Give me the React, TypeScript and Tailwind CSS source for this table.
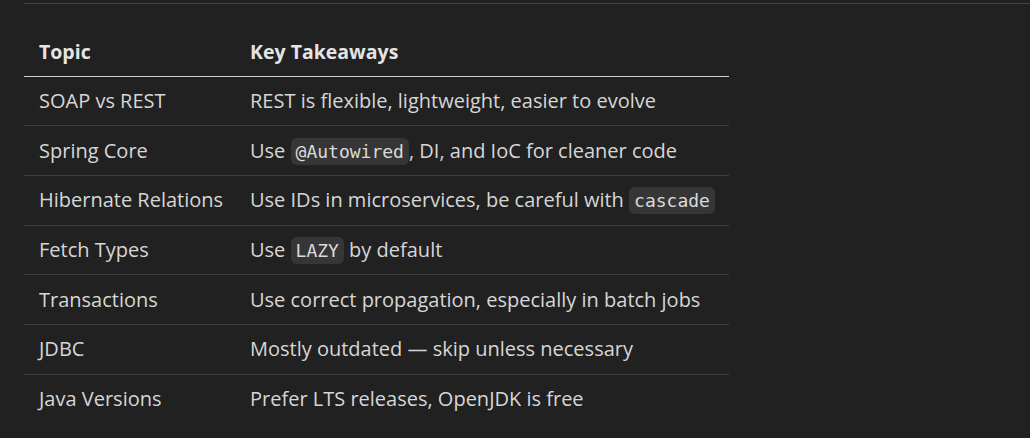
import React from "react";

type Part = string | { code: string };

const rows: { topic: string; takeaway: Part[] }[] = [
  { topic: "SOAP vs REST", takeaway: ["REST is flexible, lightweight, easier to evolve"] },
  { topic: "Spring Core", takeaway: ["Use ", { code: "@Autowired" }, ", DI, and IoC for cleaner code"] },
  { topic: "Hibernate Relations", takeaway: ["Use IDs in microservices, be careful with ", { code: "cascade" }] },
  { topic: "Fetch Types", takeaway: ["Use ", { code: "LAZY" }, " by default"] },
  { topic: "Transactions", takeaway: ["Use correct propagation, especially in batch jobs"] },
  { topic: "JDBC", takeaway: ["Mostly outdated — skip unless necessary"] },
  { topic: "Java Versions", takeaway: ["Prefer LTS releases, OpenJDK is free"] },
];

function Code({ children }: { children: string }) {
  return (
    <code className="rounded-md bg-[#363636] px-[5px] py-[3px] font-['DejaVu_Sans_Mono',monospace] text-[18px] text-[#dadada]">
      {children}
    </code>
  );
}

export default function App() {
  return (
    <div className="h-[438px] w-full overflow-hidden bg-[#212121] font-['Open_Sans',sans-serif] text-[#d6d6d6]">
      <div className="ml-[24px] pt-[3px]">
        <div className="border-t border-[#444444]" />
      </div>
      <table className="ml-[24px] mt-[24px] w-[705px] border-collapse text-left text-[20px]">
        <thead>
          <tr className="h-[48px] border-b border-[#cfcfcf] text-[19.5px]">
            <th className="w-[211px] pl-[15px] font-bold text-[#e4e4e4]">Topic</th>
            <th className="pl-[15px] font-bold text-[#e4e4e4]">Key Takeaways</th>
          </tr>
        </thead>
        <tbody>
          {rows.map((row, i) => (
            <tr
              key={row.topic}
              className={i < rows.length - 1 ? "h-[49.7px] border-b border-[#3e3e3e]" : "h-[49.7px]"}
            >
              <td className="pl-[15px]">{row.topic}</td>
              <td className="pl-[15px]">
                {row.takeaway.map((p, j) =>
                  typeof p === "string" ? <span key={j}>{p}</span> : <Code key={j}>{p.code}</Code>
                )}
              </td>
            </tr>
          ))}
        </tbody>
      </table>
    </div>
  );
}
